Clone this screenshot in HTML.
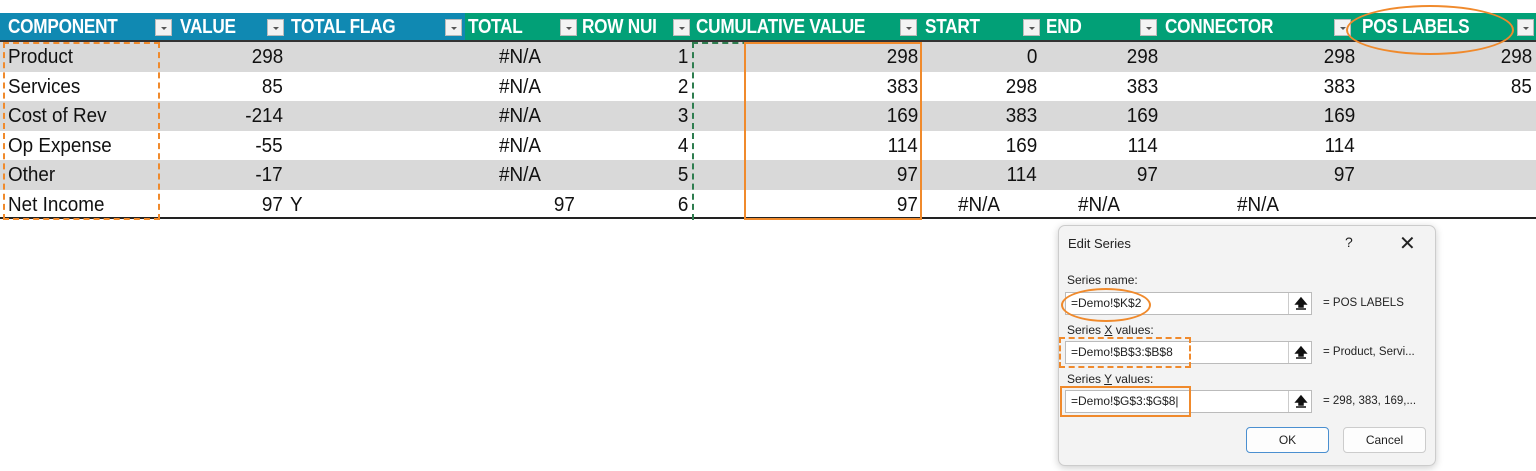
<!DOCTYPE html>
<html><head><style>
body{margin:0;width:1536px;height:471px;background:#fff;position:relative;overflow:hidden;font-family:"Liberation Sans",sans-serif;}
.a{position:absolute;white-space:nowrap;}
.hd{position:absolute;top:13px;height:28px;}
.ht{position:absolute;top:13px;color:#fff;font-weight:bold;font-size:20px;line-height:29px;transform:scaleX(.86);transform-origin:left;letter-spacing:-.3px}
.dd{position:absolute;top:19px;width:17px;height:17px;background:#f3f3f3;border:1px solid #bbb;box-sizing:border-box}
.dd:after{content:"";position:absolute;left:5px;top:7px;border-left:3px solid transparent;border-right:3px solid transparent;border-top:3px solid #555}
.row{position:absolute;left:0;width:1536px;height:29.5px}
.c{position:absolute;font-size:20.5px;line-height:29px;color:#111;transform:scaleX(.92)}
.r{transform-origin:right}
.l{transform-origin:left}
.dlg{position:absolute;left:1058px;top:225px;width:376px;height:239px;background:#f3f3f3;border:1px solid #ccc;border-radius:7px;box-shadow:0 2px 8px rgba(0,0,0,.2);font-size:12px;color:#222}
.in{position:absolute;left:6px;width:247px;height:23px;background:#fff;border:1px solid #bbb;box-sizing:border-box;font-size:12px;line-height:21px;padding-left:5px}
.up{position:absolute;left:222px;width:24px;height:21px;top:0;border-left:1px solid #ccc;}
.btn{position:absolute;top:201px;width:83px;height:26px;background:#fdfdfd;border:1px solid #ccc;border-radius:4px;box-sizing:border-box;text-align:center;line-height:24px;font-size:12px}
</style></head><body>
<div class="hd" style="left:0;width:465px;background:#1089b2"></div>
<div class="hd" style="left:465px;width:1071px;background:#02a077"></div>
<div class="a" style="left:0;top:40px;width:1536px;height:2px;background:#333"></div>
<div class="ht" style="left:8px">COMPONENT</div><div class="dd" style="left:155px"></div>
<div class="ht" style="left:180px">VALUE</div><div class="dd" style="left:267px"></div>
<div class="ht" style="left:291px">TOTAL FLAG</div><div class="dd" style="left:445px"></div>
<div class="ht" style="left:468px">TOTAL</div><div class="dd" style="left:560px"></div>
<div class="ht" style="left:582px">ROW NUI</div><div class="dd" style="left:673px"></div>
<div class="ht" style="left:696px">CUMULATIVE VALUE</div><div class="dd" style="left:900px"></div>
<div class="ht" style="left:925px">START</div><div class="dd" style="left:1023px"></div>
<div class="ht" style="left:1046px">END</div><div class="dd" style="left:1140px"></div>
<div class="ht" style="left:1165px">CONNECTOR</div><div class="dd" style="left:1334px"></div>
<div class="ht" style="left:1362px">POS LABELS</div><div class="dd" style="left:1517px"></div>

<div class="row" style="top:42px;background:#d9d9d9"></div>
<div class="row" style="top:101px;background:#d9d9d9"></div>
<div class="row" style="top:160px;background:#d9d9d9"></div>
<div class="a" style="left:0;top:217px;width:1536px;height:2px;background:#222"></div>

<div class="a" style="left:0;top:42px;width:1536px">
<div class="c l" style="left:8px;top:0">Product</div><div class="c r" style="right:1253px;top:0">298</div><div class="c l" style="left:499px;top:0">#N/A</div><div class="c r" style="right:848px;top:0">1</div><div class="c r" style="right:618px;top:0">298</div><div class="c r" style="right:499px;top:0">0</div><div class="c r" style="right:378px;top:0">298</div><div class="c r" style="right:181px;top:0">298</div><div class="c r" style="right:4px;top:0">298</div>
</div>
<div class="a" style="left:0;top:71.5px;width:1536px">
<div class="c l" style="left:8px">Services</div><div class="c r" style="right:1253px">85</div><div class="c l" style="left:499px">#N/A</div><div class="c r" style="right:848px">2</div><div class="c r" style="right:618px">383</div><div class="c r" style="right:499px">298</div><div class="c r" style="right:378px">383</div><div class="c r" style="right:181px">383</div><div class="c r" style="right:4px">85</div>
</div>
<div class="a" style="left:0;top:101px;width:1536px">
<div class="c l" style="left:8px">Cost of Rev</div><div class="c r" style="right:1253px">-214</div><div class="c l" style="left:499px">#N/A</div><div class="c r" style="right:848px">3</div><div class="c r" style="right:618px">169</div><div class="c r" style="right:499px">383</div><div class="c r" style="right:378px">169</div><div class="c r" style="right:181px">169</div>
</div>
<div class="a" style="left:0;top:130.5px;width:1536px">
<div class="c l" style="left:8px">Op Expense</div><div class="c r" style="right:1253px">-55</div><div class="c l" style="left:499px">#N/A</div><div class="c r" style="right:848px">4</div><div class="c r" style="right:618px">114</div><div class="c r" style="right:499px">169</div><div class="c r" style="right:378px">114</div><div class="c r" style="right:181px">114</div>
</div>
<div class="a" style="left:0;top:160px;width:1536px">
<div class="c l" style="left:8px">Other</div><div class="c r" style="right:1253px">-17</div><div class="c l" style="left:499px">#N/A</div><div class="c r" style="right:848px">5</div><div class="c r" style="right:618px">97</div><div class="c r" style="right:499px">114</div><div class="c r" style="right:378px">97</div><div class="c r" style="right:181px">97</div>
</div>
<div class="a" style="left:0;top:189.5px;width:1536px">
<div class="c l" style="left:8px">Net Income</div><div class="c r" style="right:1253px">97</div><div class="c l" style="left:290px">Y</div><div class="c r" style="right:961px">97</div><div class="c r" style="right:848px">6</div><div class="c r" style="right:618px">97</div><div class="c l" style="left:958px">#N/A</div><div class="c l" style="left:1078px">#N/A</div><div class="c l" style="left:1237px">#N/A</div>
</div>

<div class="a" style="left:3px;top:42px;width:153px;height:174px;border:2px dashed #f08a2c"></div>
<div class="a" style="left:692px;top:42px;width:226px;height:176px;border-left:2px dashed #2e7d4f;border-top:2px dashed #2e7d4f"></div>
<div class="a" style="left:744px;top:42px;width:174px;height:174px;border:2px solid #f08a2c"></div>
<div class="a" style="left:1346px;top:5px;width:164px;height:46px;border:2px solid #f08a2c;border-radius:50%"></div>

<div class="dlg">
<div class="a" style="left:9px;top:10px;font-size:13px">Edit Series</div>
<div class="a" style="left:286px;top:8px;font-size:14px">?</div>
<div class="a" style="left:340px;top:5px;font-size:20px;font-weight:300">✕</div>
<div class="a" style="left:8px;top:47px">Series name:</div>
<div class="in" style="top:66px">=Demo!$K$2<div class="up"><svg width="24" height="21"><path d="M12 5 L7 11 H10 V14 H14 V11 H17 Z M7 16 H17" fill="#111" stroke="#111" stroke-width="1.5"/></svg></div></div>
<div class="a" style="left:264px;top:71px;font-size:11.5px">= POS LABELS</div>
<div class="a" style="left:2px;top:62px;width:86px;height:30px;border:2px solid #f08a2c;border-radius:50%"></div>
<div class="a" style="left:8px;top:97px">Series <u>X</u> values:</div>
<div class="in" style="top:115px">=Demo!$B$3:$B$8<div class="up"><svg width="24" height="21"><path d="M12 5 L7 11 H10 V14 H14 V11 H17 Z M7 16 H17" fill="#111" stroke="#111" stroke-width="1.5"/></svg></div></div>
<div class="a" style="left:264px;top:120px;font-size:11.5px">= Product, Servi...</div>
<div class="a" style="left:0px;top:111px;width:128px;height:27px;border:2px dashed #f08a2c"></div>
<div class="a" style="left:8px;top:146px">Series <u>Y</u> values:</div>
<div class="in" style="top:164px">=Demo!$G$3:$G$8|<div class="up"><svg width="24" height="21"><path d="M12 5 L7 11 H10 V14 H14 V11 H17 Z M7 16 H17" fill="#111" stroke="#111" stroke-width="1.5"/></svg></div></div>
<div class="a" style="left:264px;top:169px;font-size:11.5px">= 298, 383, 169,...</div>
<div class="a" style="left:1px;top:160px;width:127px;height:27px;border:2px solid #f08a2c"></div>
<div class="btn" style="left:187px;border-color:#4a8fd0">OK</div>
<div class="btn" style="left:284px">Cancel</div>
</div>
</body></html>
